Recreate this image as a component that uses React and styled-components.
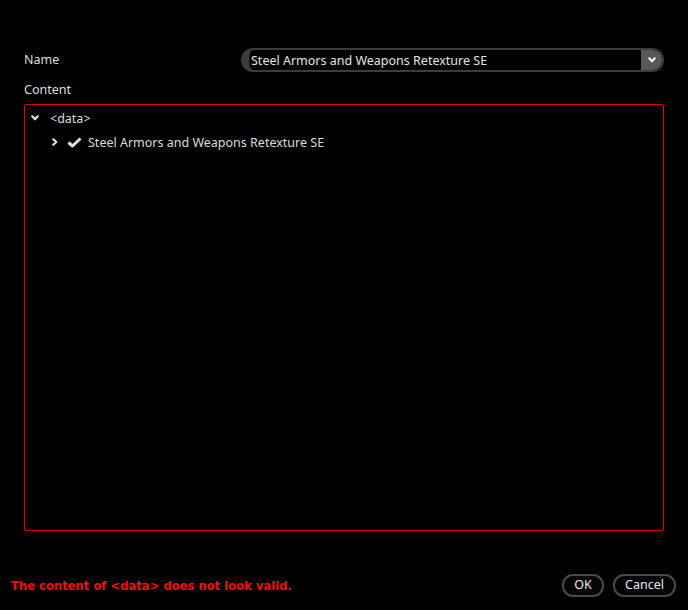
import React from 'react';
import styled, { createGlobalStyle } from 'styled-components';

const GlobalStyle = createGlobalStyle`
  html, body {
    margin: 0;
    padding: 0;
    background: #000;
  }
  body {
    font-family: "Noto Sans", "Open Sans", sans-serif;
    font-size: 12.5px;
    color: #dcdcdc;
  }
`;

const Dialog = styled.div`
  width: 688px;
  height: 610px;
  box-sizing: border-box;
  display: flex;
  flex-direction: column;
  padding-top: 48px;
  background: #000;
  border-bottom-left-radius: 8px;
  border-bottom-right-radius: 8px;
`;

const Form = styled.div`
  padding: 0 24px;
  display: flex;
  flex-direction: column;
`;

const NameRow = styled.div`
  display: flex;
  align-items: center;
  height: 24px;
`;

const Label = styled.div`
  width: ${(p) => p.$width || 'auto'};
  flex-shrink: 0;
  line-height: 16px;
  color: #dcdcdc;
`;

const Combo = styled.div`
  flex: 1;
  height: 24px;
  box-sizing: border-box;
  display: flex;
  align-items: stretch;
  border: 2px solid #3c3c3c;
  border-left-width: 8px;
  border-radius: 12px;
  background: #000;
  overflow: hidden;
`;

const ComboText = styled.div`
  flex: 1;
  display: flex;
  align-items: center;
  padding-left: 2px;
  color: #e4e4e4;
  white-space: nowrap;
`;

const ComboButton = styled.div`
  width: 21px;
  background: #585858;
  display: flex;
  align-items: center;
  justify-content: center;
`;

const ContentLabel = styled(Label)`
  margin-top: 10px;
  margin-bottom: 6px;
`;

const Tree = styled.div`
  height: 427px;
  box-sizing: border-box;
  border: 1px solid #e00000;
  border-radius: 2px;
  padding-top: 1px;
`;

const Row = styled.div`
  display: flex;
  align-items: center;
  height: 24px;
  padding-left: ${(p) => 5 + p.$depth * 20}px;
  white-space: nowrap;
`;

const Expander = styled.span`
  width: 10px;
  display: flex;
  align-items: center;
  justify-content: center;
  margin-right: ${(p) => p.$gap || 9}px;
`;

const Check = styled.span`
  display: flex;
  align-items: center;
  margin-right: 6px;
`;

const Footer = styled.div`
  margin-top: auto;
  display: flex;
  align-items: center;
  justify-content: space-between;
  padding: 0 12px 13px 11px;
`;

const ErrorText = styled.div`
  font-family: "DejaVu Sans", "Liberation Sans", sans-serif;
  font-weight: bold;
  font-size: 11.6px;
  color: #f01010;
`;

const Buttons = styled.div`
  display: flex;
  gap: 9px;
`;

const Button = styled.button`
  height: 23px;
  width: ${(p) => p.$width}px;
  box-sizing: border-box;
  padding: 0;
  background: #050505;
  color: #e8e8e8;
  border: 2px solid #4a4a4a;
  border-radius: 11px;
  font-family: "Noto Sans", "Open Sans", sans-serif;
  font-size: 12.5px;
  line-height: 1;
  cursor: pointer;
`;

const ChevronDown = ({ color = '#e0e0e0' }) => (
  <svg width="8" height="6" viewBox="0 0 8 6">
    <path d="M1.3 1.3 L4 4.3 L6.7 1.3" fill="none" stroke={color} strokeWidth="2.2" strokeLinecap="round" strokeLinejoin="round" />
  </svg>
);

const ChevronRight = () => (
  <svg width="6" height="8" viewBox="0 0 6 8">
    <path d="M1.3 1.3 L4.3 4 L1.3 6.7" fill="none" stroke="#e0e0e0" strokeWidth="2.2" strokeLinecap="round" strokeLinejoin="round" />
  </svg>
);

const CheckMark = () => (
  <svg width="15" height="11" viewBox="0 0 15 11">
    <path d="M1.5 5.5 L5.5 9 L13.5 1.5" fill="none" stroke="#e0e0e0" strokeWidth="3" strokeLinejoin="round" />
  </svg>
);

const App = () => {
  return (
    <>
      <GlobalStyle />
      <Dialog>
        <Form>
          <NameRow>
            <Label $width="217px">Name</Label>
            <Combo>
              <ComboText>Steel Armors and Weapons Retexture SE</ComboText>
              <ComboButton>
                <ChevronDown color="#f0f0f0" />
              </ComboButton>
            </Combo>
          </NameRow>
          <ContentLabel>Content</ContentLabel>
          <Tree>
            <Row $depth={0}>
              <Expander $gap={10}>
                <ChevronDown />
              </Expander>
              &lt;data&gt;
            </Row>
            <Row $depth={1}>
              <Expander $gap={7}>
                <ChevronRight />
              </Expander>
              <Check>
                <CheckMark />
              </Check>
              Steel Armors and Weapons Retexture SE
            </Row>
          </Tree>
        </Form>
        <Footer>
          <ErrorText>The content of &lt;data&gt; does not look valid.</ErrorText>
          <Buttons>
            <Button $width={42}>OK</Button>
            <Button $width={63}>Cancel</Button>
          </Buttons>
        </Footer>
      </Dialog>
    </>
  );
};

export default App;
